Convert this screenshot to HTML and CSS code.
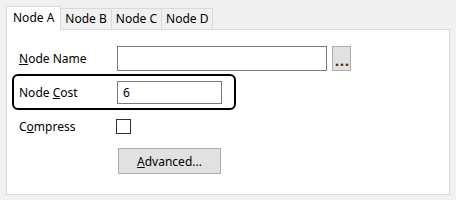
FILE: index.html
```html
<!DOCTYPE html>
<html lang="en">
<head>
    <meta charset="UTF-8">
    <title>Node Properties</title>
    <link rel="stylesheet" href="styles.css">
</head>
<body>
    <div class="dialog">
        <div class="tabs">
            <div class="tab active">Node A</div>
            <div class="tab">Node B</div>
            <div class="tab">Node C</div>
            <div class="tab">Node D</div>
        </div>
        <div class="panel">
            <div class="row">
                <label class="label"><u>N</u>ode Name</label>
                <input type="text" class="field name-field">
                <button class="browse-btn">...</button>
            </div>
            <div class="row highlight">
                <label class="label">Node <u>C</u>ost</label>
                <input type="text" class="field cost-field" value="6">
            </div>
            <div class="row check-row">
                <label class="label">C<u>o</u>mpress</label>
                <span class="checkbox"></span>
            </div>
            <div class="row btn-row">
                <button class="adv-btn"><u>A</u>dvanced...</button>
            </div>
        </div>
    </div>
</body>
</html>
```

FILE: styles.css
```css
body {
    margin: 0;
    background: #f0f0f0;
    font-family: "Noto Sans", "DejaVu Sans", sans-serif;
    font-size: 12px;
    color: #000;
}
.dialog {
    width: 444px;
    padding: 6px 0 0 6px;
}
.tabs {
    display: flex;
    align-items: flex-end;
    height: 23px;
    position: relative;
    z-index: 1;
}
.tab {
    box-sizing: border-box;
    height: 21px;
    padding: 0 4px;
    line-height: 19px;
    background: #f0f0f0;
    border: 1px solid #d9d9d9;
    border-left: none;
    border-bottom: none;
}
.tab.active {
    height: 24px;
    margin-bottom: -1px;
    padding: 0 6px 0 6px;
    line-height: 22px;
    background: #fff;
    border-left: 1px solid #d9d9d9;
}
.panel {
    box-sizing: border-box;
    height: 166px;
    background: #fff;
    border: 1px solid #d9d9d9;
    padding: 16px 0 0 12px;
}
.row {
    display: flex;
    align-items: center;
}
.label {
    width: 98px;
    flex: none;
}
.field {
    box-sizing: border-box;
    border: 1px solid #7a7a7a;
    background: #fff;
    font: inherit;
    padding: 0 5px;
    margin: 0;
    outline: none;
}
.name-field {
    width: 210px;
    height: 25px;
}
.browse-btn {
    box-sizing: border-box;
    width: 19px;
    height: 25px;
    margin-left: 5px;
    padding: 5px 0 0 1px;
    background: #e1e1e1;
    border: 1px solid #adadad;
    font: bold 13px "DejaVu Sans", sans-serif;
    color: #5a3000;
    letter-spacing: 0;
}
.highlight {
    width: fit-content;
    margin: 3px 0 0 -7px;
    padding: 5px 12px 4px 5px;
    border: 2px solid #000;
    border-radius: 6px;
}
.cost-field {
    width: 105px;
    height: 23px;
}
.check-row {
    margin-top: 9px;
    height: 15px;
}
.checkbox {
    box-sizing: border-box;
    width: 15px;
    height: 15px;
    margin-left: -1px;
    border: 1px solid #333;
    background: #fff;
}
.btn-row {
    margin-top: 14px;
    padding-left: 99px;
}
.adv-btn {
    box-sizing: border-box;
    width: 103px;
    height: 26px;
    background: #e1e1e1;
    border: 1px solid #adadad;
    font: inherit;
    color: #000;
    padding: 0;
}
```
